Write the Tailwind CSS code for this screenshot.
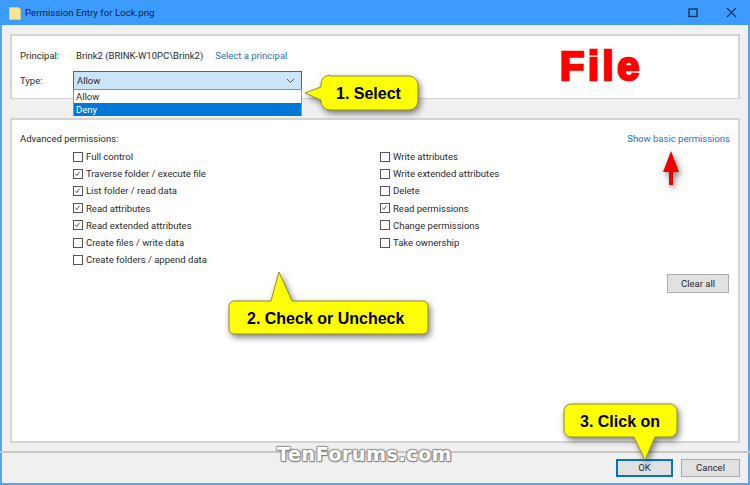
<!DOCTYPE html>
<html lang="en">
<head>
    <meta charset="UTF-8">
    <meta name="viewport" content="width=device-width, initial-scale=1.0">
    <title>Permission Entry for Lock.png</title>
    <script src="https://cdn.jsdelivr.net/npm/@tailwindcss/browser@4"></script>
</head>
<body class="bg-[#f0f0f0] overflow-hidden">
    <div class="relative w-[750px] h-[485px] flex flex-col border-x-2 border-b-2 border-[#5aa5f0] bg-[#f0f0f0] text-[9.500px] leading-[14px] text-[#2a2a2a] font-['Roboto',sans-serif]">

        <!-- title bar -->
        <div class="-mx-[2px] h-[25px] shrink-0 flex items-center bg-[#3d9bff] pl-[9px] text-[#10243c]">
            <svg width="12" height="14" viewBox="0 0 12 14" class="mr-[4px]">
                <path d="M0.5 1.5h9l2 1.5v10.500h-11z" fill="#fbe58e" stroke="#e8d27c" stroke-width="0.6"/>
            </svg>
            <span class="text-[9.700px]">Permission Entry for Lock.png</span>
            <div class="ml-auto flex items-center">
                <svg width="12" height="12" viewBox="0 0 12 12" class="mr-[25px]"><path d="M1 6.500h10" stroke="#5c8fc8" stroke-width="1"/></svg>
                <svg width="10" height="10" viewBox="0 0 10 10" class="mr-[28px]"><rect x="1" y="1" width="8" height="7.500" fill="none" stroke="#12304f" stroke-width="1.300"/></svg>
                <svg width="11" height="11" viewBox="0 0 11 11" class="mr-[13px]"><path d="M1 1l9 9M10 1l-9 9" stroke="#12304f" stroke-width="1.100"/></svg>
            </div>
        </div>

        <!-- principal card -->
        <div class="mt-[9px] ml-[8px] w-[730px] h-[65px] shrink-0 bg-white border-t-2 border-x-2 border-b border-[#d4d4d4] pl-[8px] pt-[13px]">
            <div class="flex items-center h-[14px]">
                <span class="w-[56px]">Principal:</span>
                <span>Brink2 (BRINK-W10PC\Brink2)</span>
                <span class="ml-[12px] text-[#2a6fc0]">Select a principal</span>
            </div>
            <div class="flex items-center mt-[8px]">
                <span class="w-[53px]">Type:</span>
                <div class="relative w-[229px] h-[19px] bg-[#cce4f7] border border-[#2a6ea6] flex items-center justify-between pl-[3px] pr-[6px]">
                    <span>Allow</span>
                    <svg width="9" height="6" viewBox="0 0 9 6"><path d="M1 1l3.500 3.500L8 1" fill="none" stroke="#555" stroke-width="1"/></svg>
                    <div class="absolute left-[-1px] top-[17px] w-[229px] h-[27px] bg-white border border-[#6a9cc4] z-10 leading-[13px]">
                        <div class="h-[13px] pl-[2px]">Allow</div>
                        <div class="h-[13px] pl-[2px] bg-[#0078d7] text-white">Deny</div>
                    </div>
                </div>
            </div>
        </div>

        <!-- advanced permissions card -->
        <div class="mt-[19px] ml-[8px] w-[730px] h-[325px] shrink-0 bg-white border-2 border-[#d4d4d4] pl-[8px] pr-[8px] pt-[12px]">
            <div class="flex justify-between h-[14px]">
                <span>Advanced permissions:</span>
                <span class="text-[#2a6fc0]">Show basic permissions</span>
            </div>
            <div class="flex mt-[2px] ml-[53px] leading-[17.200px]">
                <div class="w-[307px] flex flex-col">
                    <div class="flex items-center h-[17.200px] gap-[3px]"><span class="size-[10px] border border-[#555] bg-white"></span>Full control</div>
                    <div class="flex items-center h-[17.200px] gap-[3px]"><svg width="10" height="10" viewBox="0 0 10 10" class="border border-[#555]"><path d="M1.500 4.500l2 2.500 3.500-5" fill="none" stroke="#333" stroke-width="1"/></svg>Traverse folder / execute file</div>
                    <div class="flex items-center h-[17.200px] gap-[3px]"><svg width="10" height="10" viewBox="0 0 10 10" class="border border-[#555]"><path d="M1.500 4.500l2 2.500 3.500-5" fill="none" stroke="#333" stroke-width="1"/></svg>List folder / read data</div>
                    <div class="flex items-center h-[17.200px] gap-[3px]"><svg width="10" height="10" viewBox="0 0 10 10" class="border border-[#555]"><path d="M1.500 4.500l2 2.500 3.500-5" fill="none" stroke="#333" stroke-width="1"/></svg>Read attributes</div>
                    <div class="flex items-center h-[17.200px] gap-[3px]"><svg width="10" height="10" viewBox="0 0 10 10" class="border border-[#555]"><path d="M1.500 4.500l2 2.500 3.500-5" fill="none" stroke="#333" stroke-width="1"/></svg>Read extended attributes</div>
                    <div class="flex items-center h-[17.200px] gap-[3px]"><span class="size-[10px] border border-[#555] bg-white"></span>Create files / write data</div>
                    <div class="flex items-center h-[17.200px] gap-[3px]"><span class="size-[10px] border border-[#555] bg-white"></span>Create folders / append data</div>
                </div>
                <div class="flex flex-col">
                    <div class="flex items-center h-[17.200px] gap-[3px]"><span class="size-[10px] border border-[#555] bg-white"></span>Write attributes</div>
                    <div class="flex items-center h-[17.200px] gap-[3px]"><span class="size-[10px] border border-[#555] bg-white"></span>Write extended attributes</div>
                    <div class="flex items-center h-[17.200px] gap-[3px]"><span class="size-[10px] border border-[#555] bg-white"></span>Delete</div>
                    <div class="flex items-center h-[17.200px] gap-[3px]"><svg width="10" height="10" viewBox="0 0 10 10" class="border border-[#555]"><path d="M1.500 4.500l2 2.500 3.500-5" fill="none" stroke="#333" stroke-width="1"/></svg>Read permissions</div>
                    <div class="flex items-center h-[17.200px] gap-[3px]"><span class="size-[10px] border border-[#555] bg-white"></span>Change permissions</div>
                    <div class="flex items-center h-[17.200px] gap-[3px]"><span class="size-[10px] border border-[#555] bg-white"></span>Take ownership</div>
                </div>
            </div>
            <div class="flex justify-end mt-[6px] pr-[1px]">
                <button class="w-[62px] h-[19px] bg-[#e1e1e1] border border-[#adadad]">Clear all</button>
            </div>
        </div>

        <!-- footer -->
        <div class="mt-[8px] flex-1 border-t-2 border-[#c8c8c8] -mx-[2px] pr-[10px] flex justify-end items-start pt-[6px] gap-[8px]">
            <button class="w-[57px] h-[18px] bg-[#e1e1e1] border-2 border-[#0a70c0] leading-[12px]">OK</button>
            <button class="w-[59px] h-[18px] bg-[#e1e1e1] border border-[#adadad]">Cancel</button>
        </div>

        <!-- annotations over the dialog -->
        <div class="absolute left-[-2px] top-0 w-[750px] h-[485px] pointer-events-none">
            <svg width="750" height="485" viewBox="0 0 750 485" class="absolute left-0 top-0 drop-shadow-[2px_3px_3px_rgba(0,0,0,0.5)]">
                <path d="M330 76h79a9 9 0 0 1 9 9v16a9 9 0 0 1-9 9h-79a9 9 0 0 1-9-9v-1l-16-7 16-6v-3a9 9 0 0 1 9-9z" fill="#ffff00" stroke="#8f8f30" stroke-width="1"/>
                <path d="M234 301h37l8-29 13 29h131a5 5 0 0 1 5 5v23a5 5 0 0 1-5 5H234a5 5 0 0 1-5-5v-23a5 5 0 0 1 5-5z" fill="#ffff00" stroke="#8f8f30" stroke-width="1"/>
                <path d="M571 404h99a7 7 0 0 1 7 7v19a7 7 0 0 1-7 7h-15l-10 23-11-23h-63a7 7 0 0 1-7-7v-19a7 7 0 0 1 7-7z" fill="#ffff00" stroke="#8f8f30" stroke-width="1"/>
                <path d="M671 151l8 21h-6v13h-4v-13h-6z" fill="#ee0000"/>
            </svg>
            <span class="absolute left-[336px] top-[85px] text-[16px] leading-[18px] font-bold text-black font-['Liberation_Sans',sans-serif]">1. Select</span>
            <span class="absolute left-[247px] top-[310px] text-[16px] leading-[18px] font-bold text-black font-['Liberation_Sans',sans-serif]">2. Check or Uncheck</span>
            <span class="absolute left-[580px] top-[413px] text-[16px] leading-[18px] font-bold text-black font-['Liberation_Sans',sans-serif]">3. Click on</span>
            <span class="absolute left-[560px] top-[43px] text-[40px] leading-[46px] tracking-[3.500px] font-bold text-[#ff0000] [-webkit-text-stroke:2.500px_#ff0000] font-['Liberation_Sans',sans-serif]">File</span>
            <span class="absolute left-[277px] top-[443px] text-[19px] leading-[22px] tracking-[0.600px] font-bold text-white [text-shadow:1px_1px_1px_#777,-1px_-1px_1px_#999,1px_-1px_1px_#999,-1px_1px_1px_#999] font-['DejaVu_Sans',sans-serif]">TenForums.com</span>
        </div>
    </div>
</body>
</html>
